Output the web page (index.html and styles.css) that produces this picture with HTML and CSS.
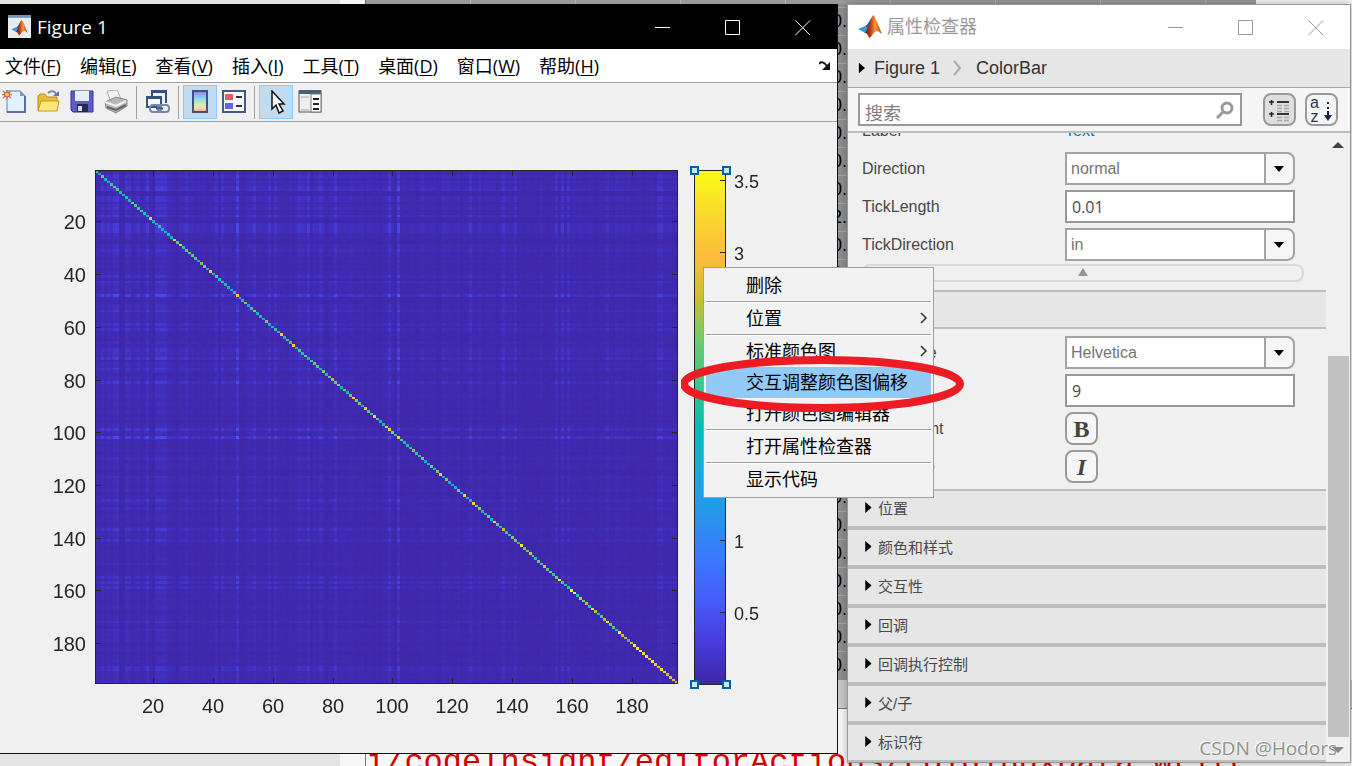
FILE: index.html
```html
<!DOCTYPE html>
<html lang="zh-CN">
<head>
    <meta charset="UTF-8">
    <meta name="viewport" content="width=device-width, initial-scale=1.0">
    <title>Figure 1</title>
    <link rel="stylesheet" href="styles.css">
</head>
<body>
    <svg class="defs" width="0" height="0" aria-hidden="true">
        <defs>
            <linearGradient id="logoRed" x1="0" x2="1">
                <stop offset="0" stop-color="#5a1a10"/>
                <stop offset="0.35" stop-color="#c8401c"/>
                <stop offset="0.6" stop-color="#f59a35"/>
                <stop offset="1" stop-color="#c03a18"/>
            </linearGradient>
            <symbol id="logo" viewBox="0 0 24 24">
                <path d="M0 14 L7 11 L11 15 L7 18 Z" fill="#3f9ad0"/>
                <path d="M7 11 C10 10 12 4 15 1 C14 7 13 12 11 15 Z" fill="#1f5f94"/>
                <path d="M15 0 C12 6 11 12 7 18 C9 18 10 20 11 23 C14 22 16 16 19 16 C21 16 22 18 24 19 C21 12 18 2 15 0 Z" fill="url(#logoRed)"/>
            </symbol>
            <symbol id="arrowDown" viewBox="0 0 12 8">
                <path d="M1 1 H11 L6 7 Z"/>
            </symbol>
            <symbol id="arrowRight" viewBox="0 0 8 12">
                <path d="M1 0 V12 L8 6 Z"/>
            </symbol>
        </defs>
    </svg>

    <div class="desktop">
        <!-- windows that lie behind -->
        <div class="backdrop">
            <div class="sheet"></div>
            <div class="sheet-footer"></div>
            <div class="console">i/codeInsight/editorActions/FoldingxData write</div>
        </div>

        <main class="window figure">
            <header class="titlebar dark">
                <svg class="app-icon" viewBox="0 0 24 24">
                    <rect x="0" y="0" width="24" height="24" fill="#e9edf0"/>
                    <rect x="0" y="0" width="24" height="3" fill="#7396b8"/>
                    <use href="#logo" x="3" y="5" width="18" height="17"/>
                </svg>
                <h1>Figure 1</h1>
                <div class="window-buttons">
                    <button aria-label="最小化"><svg viewBox="0 0 16 16"><path d="M0 8.500H15"/></svg></button>
                    <button aria-label="最大化"><svg viewBox="0 0 16 16"><path d="M.5 1.500H14.500V15.500H.5Z"/></svg></button>
                    <button aria-label="关闭"><svg viewBox="0 0 16 16"><path d="M.5 1.500L15 16M15 1.500L.5 16"/></svg></button>
                </div>
            </header>

            <nav class="menubar">
                <button>文件(<u>F</u>)</button>
                <button>编辑(<u>E</u>)</button>
                <button>查看(<u>V</u>)</button>
                <button>插入(<u>I</u>)</button>
                <button>工具(<u>T</u>)</button>
                <button>桌面(<u>D</u>)</button>
                <button>窗口(<u>W</u>)</button>
                <button>帮助(<u>H</u>)</button>
                <svg class="dock" viewBox="0 0 12 10"><path d="M0 3 C2 0 5 1 8 5" fill="none" stroke="#111" stroke-width="2"/><path d="M11 1 V9 H3 Z" fill="#111"/></svg>
            </nav>

            <div class="toolbar">
                <button aria-label="新建图窗">
                    <svg viewBox="0 0 24 24">
                        <path d="M5 1 H18 L23 6 V22 H5 Z" fill="#e3f1fc" stroke="#8ea3cc" stroke-width="1.500"/>
                        <path d="M23 6 V22 H5" fill="none" stroke="#5a70a0" stroke-width="2"/>
                        <path d="M18 1 V6 H23 Z" fill="#7e96c0"/>
                        <path d="M5 0 V9 M0 4.500 H10 M1 1 L9 8 M9 1 L1 8" stroke="#d07a58" stroke-width="1.500"/>
                        <circle cx="5" cy="4.500" r="2.500" fill="#ffb870" stroke="#c85a30"/>
                    </svg>
                </button>
                <button aria-label="打开文件">
                    <svg viewBox="0 0 24 24">
                        <path d="M2 20 V6 L4 4 H9 L11 7 H21 V20 Z" fill="#e9bd35" stroke="#bd8b18"/>
                        <path d="M2 21 L5 11 H23 L21 21 Z" fill="#ffe77c" stroke="#c8961c"/>
                        <path d="M12 3 C15 0 19 1 20 4" fill="none" stroke="#7390ae" stroke-width="2"/>
                        <path d="M17 6 H23 V1 Z" fill="#5c7c9e"/>
                    </svg>
                </button>
                <button aria-label="保存图窗">
                    <svg viewBox="0 0 24 24">
                        <path d="M1 1 H23 V22 H3 L1 20 Z" fill="#5b5cc8" stroke="#353486"/>
                        <rect x="5" y="1" width="14" height="10" fill="#e5effc"/>
                        <rect x="7" y="14" width="11" height="8" fill="#29294f"/>
                        <rect x="8" y="16" width="4" height="5" fill="#d8dcec"/>
                    </svg>
                </button>
                <button aria-label="打印图窗">
                    <svg viewBox="0 0 24 24">
                        <path d="M6 10 L3 1 L13 0 L17 9 Z" fill="#eef3fc" stroke="#a9b0c4"/>
                        <path d="M1 12 L12 7 L23 10 V16 L12 23 L2 18 Z" fill="#b6b6b6" stroke="#888"/>
                        <path d="M1 12 L12 16 L22 11" fill="none" stroke="#f4f4f4" stroke-width="2"/>
                        <path d="M3 17 L12 20 L22 15" fill="none" stroke="#666" stroke-width="2"/>
                    </svg>
                </button>
                <span class="separator"></span>
                <button aria-label="链接绘图">
                    <svg viewBox="0 0 24 24">
                        <path d="M6 8 V1 H20 V13" fill="none" stroke="#35507f" stroke-width="2"/>
                        <path d="M5 1.500 H21" stroke="#35507f" stroke-width="3"/>
                        <rect x="1" y="7" width="14" height="10" fill="#f4f8fc" stroke="#35507f" stroke-width="2"/>
                        <path d="M0 7.500 H16" stroke="#35507f" stroke-width="3"/>
                        <rect x="4" y="15" width="11" height="7" rx="3" fill="none" stroke="#7189ad" stroke-width="2"/>
                        <rect x="12" y="15" width="11" height="7" rx="3" fill="none" stroke="#7189ad" stroke-width="2"/>
                        <path d="M10 18.500 H17" stroke="#425d83" stroke-width="2"/>
                    </svg>
                </button>
                <span class="separator"></span>
                <button class="active" aria-label="插入颜色栏">
                    <svg viewBox="0 0 24 24">
                        <defs>
                            <linearGradient id="miniBar" x1="0" y1="0" x2="0" y2="1">
                                <stop offset="0" stop-color="#8d7ee4"/>
                                <stop offset="0.35" stop-color="#89d8f5"/>
                                <stop offset="0.6" stop-color="#c6edbb"/>
                                <stop offset="0.8" stop-color="#fae09a"/>
                                <stop offset="1" stop-color="#f3a7a0"/>
                            </linearGradient>
                        </defs>
                        <rect x="5" y="1" width="14" height="21" fill="url(#miniBar)" stroke="#41517a" stroke-width="2"/>
                    </svg>
                </button>
                <button aria-label="插入图例">
                    <svg viewBox="0 0 24 24">
                        <rect x="1" y="1" width="22" height="21" fill="#f6f9ff" stroke="#43598a" stroke-width="2"/>
                        <rect x="3" y="4" width="8" height="6" fill="#e06060"/>
                        <rect x="3" y="13" width="8" height="6" fill="#6666dc"/>
                        <path d="M14 7 H20 M14 16 H20" stroke="#333" stroke-width="2"/>
                    </svg>
                </button>
                <span class="separator"></span>
                <button class="active" aria-label="编辑绘图">
                    <svg viewBox="0 0 24 24">
                        <path d="M8 1 V19 L12 15 L15 23 L19 21 L15 14 H20 Z" fill="#fff" stroke="#111" stroke-width="1.500"/>
                    </svg>
                </button>
                <button aria-label="打开属性检查器">
                    <svg viewBox="0 0 24 24">
                        <rect x="1" y="1" width="22" height="21" fill="#eee" stroke="#555"/>
                        <rect x="1" y="0" width="22" height="4" fill="#4c6078"/>
                        <rect x="13" y="4" width="10" height="18" fill="#fff" stroke="#777"/>
                        <path d="M3 7 H11 M3 20 H11" stroke="#ccc" stroke-width="2"/>
                        <path d="M15 9 H21 M15 14 H21 M15 19 H21" stroke="#222" stroke-width="2"/>
                    </svg>
                </button>
            </div>

            <svg class="axes" viewBox="0 122 837 631">
                <defs>
                    <linearGradient id="parula" x1="0" y1="1" x2="0" y2="0"></linearGradient>
                </defs>
                <foreignObject x="95" y="170" width="583" height="514">
                    <canvas id="heatmap" class="heatmap" width="195" height="195"></canvas>
                </foreignObject>
                <rect class="axis-line" x="95.500" y="170.500" width="582" height="513"/>
                <g id="ticks"></g>
                <rect class="axis-line bar" x="694.500" y="170.500" width="31" height="514"/>
                <g id="barTicks" class="bar-labels"></g>
                <g class="handles">
                    <rect x="691" y="167" width="7" height="7"/>
                    <rect x="723" y="167" width="7" height="7"/>
                    <rect x="691" y="681" width="7" height="7"/>
                    <rect x="723" y="681" width="7" height="7"/>
                </g>
            </svg>
        </main>

        <div class="gutter" id="gutter"></div>

        <aside class="window inspector">
            <header class="titlebar">
                <svg class="app-icon" viewBox="0 0 24 24"><use href="#logo" width="24" height="24"/></svg>
                <h2>属性检查器</h2>
                <div class="window-buttons">
                    <button aria-label="最小化"><svg viewBox="0 0 16 16"><path d="M0 8.500H15"/></svg></button>
                    <button aria-label="最大化"><svg viewBox="0 0 16 16"><path d="M.5 1.500H14.500V15.500H.5Z"/></svg></button>
                    <button aria-label="关闭"><svg viewBox="0 0 16 16"><path d="M.5 1.500L15 16M15 1.500L.5 16"/></svg></button>
                </div>
            </header>

            <nav class="crumbs">
                <svg class="caret" viewBox="0 0 8 12"><use href="#arrowRight"/></svg>
                <a href="#">Figure 1</a>
                <svg class="chevron" viewBox="0 0 8 16"><path d="M1 1 L7 8 L1 15"/></svg>
                <a href="#">ColorBar</a>
            </nav>

            <div class="search-row">
                <div class="search">
                    <input type="text" placeholder="搜索" aria-label="搜索">
                    <svg viewBox="0 0 18 18"><circle cx="11" cy="7" r="5"/><path d="M7 11 L1 17"/></svg>
                </div>
                <button class="square pressed" aria-label="分组">
                    <svg viewBox="0 0 24 24">
                        <path d="M1 4 H6 M3.500 2 V7 M1 16 H6 M3.500 14 V19" stroke="#222" stroke-width="1.500"/>
                        <path d="M9 4 H21 M9 16 H21" stroke="#333" stroke-width="2"/>
                        <path d="M9 7.500 H14 M16 7.500 H21 M9 10.500 H14 M16 10.500 H21 M9 13.500 H14 M16 13.500 H21 M9 19.500 H14 M16 19.500 H21 M9 22.500 H14 M16 22.500 H21" stroke="#aaa" stroke-width="1.500"/>
                    </svg>
                </button>
                <button class="square sort" aria-label="排序">
                    <span>a<br>z</span>
                    <svg viewBox="0 0 10 24"><path d="M5 4 V6 M5 9 V11 M5 13 V20" stroke="#12294d" stroke-width="2"/><path d="M1 17 H9 L5 23 Z" fill="#12294d"/></svg>
                </button>
            </div>

            <div class="panel">
                <div class="properties">
                    <div class="rows scrolled">
                        <div class="row"><span>Label</span><a class="value" href="#">Text</a></div>
                        <div class="row">
                            <label for="direction">Direction</label>
                            <div class="combo">
                                <select id="direction"><option>normal</option><option>reverse</option></select>
                                <svg viewBox="0 0 12 8"><use href="#arrowDown"/></svg>
                            </div>
                        </div>
                        <div class="row">
                            <label for="tickLength">TickLength</label>
                            <input type="text" id="tickLength" value="0.01">
                        </div>
                        <div class="row">
                            <label for="tickDirection">TickDirection</label>
                            <div class="combo">
                                <select id="tickDirection"><option>in</option><option>out</option></select>
                                <svg viewBox="0 0 12 8"><use href="#arrowDown"/></svg>
                            </div>
                        </div>
                    </div>
                    <button class="collapse" aria-label="收起"><svg viewBox="0 0 10 8"><path d="M5 0 L10 8 H0 Z"/></svg></button>

                    <button class="group"><svg viewBox="0 0 12 8"><use href="#arrowDown"/></svg>字体</button>
                    <div class="rows">
                        <div class="row">
                            <label for="fontName">FontName</label>
                            <div class="combo">
                                <select id="fontName"><option>Helvetica</option></select>
                                <svg viewBox="0 0 12 8"><use href="#arrowDown"/></svg>
                            </div>
                        </div>
                        <div class="row">
                            <label for="fontSize">FontSize</label>
                            <input type="text" id="fontSize" value="9">
                        </div>
                        <div class="row">
                            <label for="fontWeight">FontWeight</label>
                            <button class="square bold" id="fontWeight">B</button>
                        </div>
                        <div class="row">
                            <label for="fontAngle">FontAngle</label>
                            <button class="square italic" id="fontAngle">I</button>
                        </div>
                    </div>

                    <button class="group"><svg viewBox="0 0 8 12"><use href="#arrowRight"/></svg>位置</button>
                    <button class="group"><svg viewBox="0 0 8 12"><use href="#arrowRight"/></svg>颜色和样式</button>
                    <button class="group"><svg viewBox="0 0 8 12"><use href="#arrowRight"/></svg>交互性</button>
                    <button class="group"><svg viewBox="0 0 8 12"><use href="#arrowRight"/></svg>回调</button>
                    <button class="group"><svg viewBox="0 0 8 12"><use href="#arrowRight"/></svg>回调执行控制</button>
                    <button class="group"><svg viewBox="0 0 8 12"><use href="#arrowRight"/></svg>父/子</button>
                    <button class="group"><svg viewBox="0 0 8 12"><use href="#arrowRight"/></svg>标识符</button>
                </div>
                <div class="scrollbar">
                    <svg viewBox="0 0 12 6"><path d="M6 0 L12 6 H0 Z" fill="#444"/></svg>
                    <div class="thumb"></div>
                    <svg class="down" viewBox="0 0 12 6"><path d="M0 0 H12 L6 6 Z" fill="#888"/></svg>
                </div>
            </div>
        </aside>

        <div class="context-menu" role="menu">
            <button role="menuitem">删除</button>
            <hr>
            <button role="menuitem">位置<svg viewBox="0 0 6 12"><path d="M0 1 L5 6 L0 11"/></svg></button>
            <hr>
            <button role="menuitem">标准颜色图<svg viewBox="0 0 6 12"><path d="M0 1 L5 6 L0 11"/></svg></button>
            <button role="menuitem" class="selected">交互调整颜色图偏移</button>
            <button role="menuitem">打开颜色图编辑器</button>
            <hr>
            <button role="menuitem">打开属性检查器</button>
            <hr>
            <button role="menuitem">显示代码</button>
        </div>

        <svg class="marker" viewBox="0 0 284 58"><ellipse cx="141" cy="29" rx="138" ry="24"/></svg>
        <div class="watermark">CSDN @Hodors</div>
    </div>

    <script src="figure.js"></script>
</body>
</html>
```
FILE: styles.css
```css
body {
    margin: 0;
    font-family: "Open Sans", "Noto Sans CJK SC", sans-serif;
    color: #000;
}

button, input, select {
    font: inherit;
    color: inherit;
    margin: 0;
    padding: 0;
    border: none;
    background: none;
    box-sizing: border-box;
}

a {
    color: inherit;
    text-decoration: none;
}

.defs {
    position: absolute;
}

.desktop {
    position: relative;
    display: grid;
    grid-template-columns: 838fr 9px 504fr;
    height: 100vh;
    min-height: 766px;
    padding: 4px 1px 0 0;
    box-sizing: border-box;
    overflow: hidden;
}

/* behind the windows */
.backdrop {
    position: absolute;
    inset: 0;
    display: flex;
    flex-direction: column;
    background: linear-gradient(to right, #e4e4e4 340px, #f6f6f6 340px);
}

.sheet {
    height: 680px;
    margin: 0 96px 0 365px;
    border-left: 1px solid #666;
    background: repeating-linear-gradient(to right, #9a9a9a 0 104px, #b4b4b4 104px 105px);
}

.sheet-footer {
    height: 28px;
    margin-left: 365px;
    background: #c8c8c8;
    border-bottom: 1px solid #777;
}

.console {
    flex: 1;
    margin: 32px 96px 0 365px;
    border-left: 1px solid #777;
    font-family: "Liberation Mono", monospace;
    font-size: 32px;
    line-height: 44px;
    color: #d40000;
    background: #f6f6f6;
    white-space: nowrap;
    overflow: hidden;
}

.gutter {
    position: relative;
    padding-top: 3px;
    height: 673px;
    overflow: hidden;
    background: #8e8e8e;
}

.gutter span {
    display: flex;
    justify-content: flex-end;
    height: 27px;
    line-height: 27px;
    border-top: 1px solid #a8a8a8;
    font-family: "Liberation Sans", sans-serif;
    font-size: 18px;
}

/* windows */
.window {
    position: relative;
    display: flex;
    flex-direction: column;
    min-width: 0;
    box-sizing: border-box;
    background: #f0f0f0;
}

.figure {
    margin-bottom: 12px;
    border-right: 1px solid #111;
    border-bottom: 1px solid #111;
    overflow: hidden;
}

.inspector {
    margin-bottom: 3px;
    border: 1px solid #999;
    box-shadow: 0 0 8px rgba(0, 0, 0, 0.3);
    font-family: "Liberation Sans", "Noto Sans CJK SC", sans-serif;
    color: #333;
}

.titlebar {
    display: flex;
    align-items: center;
    height: 44px;
    padding: 0 26px 0 10px;
    background: #fff;
    color: #999;
}

.titlebar.dark {
    height: 45px;
    padding-left: 8px;
    background: #000;
    color: #fff;
}

.titlebar h1, .titlebar h2 {
    flex: 1;
    margin: 0 0 0 5px;
    font-size: 18px;
    line-height: 24px;
    font-weight: normal;
}

.titlebar h1 {
    margin-left: 6px;
    font-size: 19px;
}

.app-icon {
    width: 24px;
    height: 24px;
}

.dark .app-icon {
    width: 23px;
    height: 23px;
}

.window-buttons {
    display: flex;
    gap: 54px;
}

.window-buttons button {
    display: flex;
}

.window-buttons svg {
    width: 16px;
    height: 16px;
    fill: none;
    stroke: currentColor;
    stroke-width: 1;
}

.menubar {
    display: flex;
    align-items: center;
    gap: 19px;
    height: 33px;
    padding: 0 6px 0 5px;
    background: #fff;
    border-bottom: 1px solid #a0a0a0;
    font-size: 18px;
    line-height: 30px;
}

.menubar button {
    white-space: nowrap;
}

.menubar u {
    text-underline-offset: 2px;
    text-decoration-thickness: 1px;
}

.dock {
    width: 12px;
    height: 10px;
    margin-left: auto;
}

.toolbar {
    display: flex;
    align-items: center;
    height: 38px;
    margin-left: -3px;
    border-bottom: 1px solid #a0a0a0;
}

.toolbar button {
    display: flex;
    align-items: center;
    justify-content: center;
    width: 34px;
    height: 34px;
}

.toolbar .active {
    background: #c0dcf3;
    border: 1px solid #90c8f6;
}

.toolbar svg {
    width: 24px;
    height: 24px;
    flex: none;
}

.separator {
    width: 1px;
    height: 33px;
    margin: 0 4px 0 3px;
    background: #a0a0a0;
}

/* plot */
.axes {
    width: 100%;
    flex: 1;
    min-height: 0;
    font-family: "Liberation Sans", sans-serif;
    font-size: 20px;
    fill: #262626;
}

.heatmap {
    display: block;
    width: 100%;
    height: 100%;
    image-rendering: pixelated;
}

.axis-line {
    fill: none;
    stroke: #262626;
}

.axis-line.bar {
    fill: url(#parula);
}

.tick {
    stroke: #262626;
}

.bar-labels {
    font-size: 18px;
}

.handles {
    fill: #cde6f7;
    stroke: #0060a8;
    stroke-width: 2;
}

/* inspector */
.crumbs {
    display: flex;
    align-items: center;
    height: 38px;
    padding-left: 10px;
    background: #e6e6e6;
    border-bottom: 1px solid #a6a6a6;
    font-size: 18px;
}

.caret {
    width: 7px;
    height: 12px;
    margin-right: 9px;
    fill: #000;
}

.chevron {
    width: 8px;
    height: 16px;
    margin: 0 15px 0 13px;
    fill: none;
    stroke: #aaa;
    stroke-width: 2;
}

.search-row {
    display: flex;
    align-items: center;
    height: 43px;
    padding: 0 12px 0 10px;
    background: #f5f5f5;
    border-bottom: 2px solid #bdbdbd;
}

.search {
    display: flex;
    align-items: center;
    flex: 1;
    height: 33px;
    margin-right: 21px;
    padding-right: 6px;
    box-sizing: border-box;
    border: 2px solid #999;
    background: #fff;
}

.search input {
    flex: 1;
    min-width: 0;
    height: 29px;
    padding: 4px 0 0 5px;
    font-family: "Noto Sans CJK SC", sans-serif;
    font-size: 18px;
}

.search input::placeholder {
    color: #808080;
}

.search svg {
    width: 18px;
    height: 18px;
    fill: none;
    stroke: #999;
    stroke-width: 3;
}

.square {
    display: flex;
    align-items: center;
    justify-content: center;
    width: 33px;
    height: 33px;
    border: 2px solid #999;
    border-radius: 8px;
    background: #f6f6f6;
}

.square svg {
    flex: none;
    height: 24px;
}

.square.pressed {
    background: #dedede;
}

.square.pressed svg {
    width: 24px;
}

.square.sort {
    margin-left: 9px;
    font-size: 16px;
    line-height: 14px;
    gap: 4px;
}

.sort svg {
    width: 10px;
}

.square.bold, .square.italic {
    font-family: "Liberation Serif", serif;
    font-size: 24px;
    font-weight: bold;
    line-height: 28px;
    color: #444;
}

.square.italic {
    font-style: italic;
}

.panel {
    display: grid;
    grid-template-columns: 1fr 24px;
    flex: 1;
    min-height: 0;
    overflow: hidden;
}

.properties {
    min-width: 0;
    overflow: hidden;
}

.rows {
    display: flex;
    flex-direction: column;
    gap: 5px;
    padding: 7px 31px 6px 14px;
    font-size: 16px;
    color: #484848;
}

.rows.scrolled {
    margin-top: -19px;
    padding-top: 0;
    padding-bottom: 3px;
}

.row {
    display: grid;
    grid-template-columns: 203fr 230fr;
    align-items: center;
    height: 33px;
}

.value {
    color: #0076c0;
}

.row input {
    height: 33px;
    min-width: 0;
    padding-left: 5px;
    border: 2px solid #999;
    background: #fff;
    font-family: "Open Sans", sans-serif;
}

.combo {
    display: flex;
    align-items: center;
    height: 33px;
    box-sizing: border-box;
    border: 2px solid #a4a4a4;
    border-radius: 0 8px 8px 0;
    background: #f6f6f6;
    overflow: hidden;
}

.combo select {
    flex: 1;
    align-self: stretch;
    padding-left: 4px;
    appearance: none;
    border-right: 2px solid #a4a4a4;
    border-radius: 0;
    background: #fff;
    color: #747474;
}

.combo svg {
    width: 12px;
    height: 8px;
    margin: 0 8px 0 7px;
    fill: #000;
}

.collapse {
    display: flex;
    justify-content: center;
    width: calc(100% - 36px);
    height: 18px;
    margin: 0 22px 8px 14px;
    padding-top: 2px;
    border: 2px solid #d8d8d8;
    border-radius: 8px;
}

.collapse svg {
    width: 10px;
    height: 8px;
    fill: #949494;
}

.group {
    display: flex;
    align-items: center;
    width: 100%;
    height: 39px;
    padding: 0 0 2px 16px;
    border-top: 2px solid #bdbdbd;
    border-bottom: 2px solid #bdbdbd;
    background: #e6e6e6;
    font-size: 15px;
    color: #484848;
}

.group svg {
    width: 8px;
    height: 11px;
    margin-right: 6px;
    fill: #000;
}

.scrollbar {
    display: grid;
    grid-template-rows: 24px 199fr 381fr 25px;
    justify-items: center;
    align-items: center;
}

.scrollbar svg {
    width: 12px;
    height: 6px;
}

.thumb {
    grid-row: 3;
    align-self: stretch;
    width: 21px;
    background: #c1c1c1;
}

.scrollbar .down {
    grid-row: 4;
}

/* popup of the colorbar */
.context-menu {
    position: absolute;
    left: 703px;
    top: 267px;
    width: 231px;
    padding: 2px;
    box-sizing: border-box;
    border: 1px solid #a0a0a0;
    background: #f2f2f2;
}

.context-menu button {
    display: flex;
    align-items: center;
    justify-content: space-between;
    width: 100%;
    height: 31px;
    padding: 0 4px 2px 40px;
    font-size: 18px;
    line-height: 28px;
}

.context-menu .selected {
    background: #91c9f7;
}

.context-menu hr {
    height: 1px;
    margin: 0;
    border: none;
    border-top: 1px solid #a0a0a0;
    background: #fff;
}

.context-menu svg {
    width: 6px;
    height: 12px;
    overflow: visible;
    fill: none;
    stroke: #333;
    stroke-width: 1.5;
}

.marker {
    position: absolute;
    left: 681px;
    top: 355px;
    width: 284px;
    height: 58px;
    fill: none;
    stroke: #ed1c24;
    stroke-width: 8;
}

.watermark {
    position: absolute;
    right: 15px;
    bottom: 6px;
    font-size: 19px;
    line-height: 24px;
    color: #909090;
    text-shadow: -1px -1px 0 #fff;
}
```
FILE: figure.js
```js
const N = 195;
const SVG_NS = 'http://www.w3.org/2000/svg';
const PARULA = [
    [62, 38, 168], [70, 60, 220], [71, 92, 250], [58, 122, 254], [39, 150, 235],
    [20, 172, 222], [5, 190, 182], [55, 200, 140], [105, 204, 110], [200, 193, 41],
    [254, 188, 60], [249, 218, 45], [249, 251, 21]
];

function parula(v) {
    const p = Math.max(0, Math.min(0.9999, v)) * (PARULA.length - 1);
    const k = Math.floor(p);
    return PARULA[k].map((c, i) => Math.round(c + (PARULA[k + 1][i] - c) * (p - k)));
}

// repeatable random numbers
let seed = 29;
function random() {
    seed = (seed * 1664525 + 1013904223) % 4294967296;
    return seed / 4294967296;
}

// strength of each row and column
const strength = [];
for (let i = 0; i < N; i++) {
    const level = i < 100 ? 0.15 : 0.1;
    strength.push(0.03 + random() * level + (random() > 0.85 ? 0.08 : 0));
}
const peaks = {
    2: 0.32, 4: 0.3, 6: 0.38, 7: 0.42, 10: 0.32, 11: 0.3, 14: 0.3, 17: 0.42, 20: 0.38, 21: 0.38,
    22: 0.4, 23: 0.36, 30: 0.3, 40: 0.3, 42: 0.32, 47: 0.6, 53: 0.34, 58: 0.32, 60: 0.32, 68: 0.32,
    71: 0.42, 75: 0.34, 80: 0.38, 98: 0.42, 101: 0.58, 125: 0.32, 136: 0.32, 140: 0.28,
    154: 0.3, 156: 0.34, 158: 0.3, 171: 0.25, 188: 0.28, 189: 0.3
};
for (const i in peaks) {
    strength[i] = peaks[i];
}

function drawHeatmap() {
    const context = document.getElementById('heatmap').getContext('2d');
    for (let y = 0; y < N; y++) {
        for (let x = 0; x <= y; x++) {
            let v = strength[x] * strength[y] * 0.42 + (strength[x] + strength[y]) * 0.018 + random() * 0.006 - 0.002;
            if (x === y) {
                v = 0.42 + random() * 0.3;
                if (random() > 0.85 || x === 47 || x === 98 || x === 101) v = 0.88;
                if (x > 135) v += 0.1;
                if (x > 182) v = 0.75 + random() * 0.22;
            }
            context.fillStyle = `rgb(${parula(v).join(',')})`;
            context.fillRect(x, y, 1, 1);
            context.fillRect(y, x, 1, 1);
        }
    }
}

function addLine(parent, x1, y1, x2, y2) {
    const line = document.createElementNS(SVG_NS, 'path');
    line.setAttribute('d', `M${x1} ${y1}L${x2} ${y2}`);
    line.setAttribute('class', 'tick');
    parent.appendChild(line);
}

function addText(parent, x, y, text, anchor) {
    const label = document.createElementNS(SVG_NS, 'text');
    label.setAttribute('x', x);
    label.setAttribute('y', y);
    label.setAttribute('text-anchor', anchor);
    label.textContent = text;
    parent.appendChild(label);
}

function drawTicks() {
    const ticks = document.getElementById('ticks');
    for (let n = 20; n <= 180; n += 20) {
        const x = Math.round(95 + (n - 0.5) * 583 / N) + 0.5;
        const y = Math.round(170 + (n - 0.5) * 514 / N) + 0.5;
        addLine(ticks, x, 171, x, 176);
        addLine(ticks, x, 678, x, 683);
        addLine(ticks, 96, y, 101, y);
        addLine(ticks, 672, y, 677, y);
        addText(ticks, Math.floor(x), 713, n, 'middle');
        addText(ticks, 86, Math.round(y) + 7, n, 'end');
    }

    const barTicks = document.getElementById('barTicks');
    for (let v = 0.5; v <= 3.5; v += 0.5) {
        const y = Math.round(685 - v * 144) - 0.5;
        addLine(barTicks, 720, y, 725, y);
        addText(barTicks, 734, Math.round(y) + 7, v, 'start');
    }
}

function fillColorbar() {
    const gradient = document.getElementById('parula');
    PARULA.forEach((color, i) => {
        const stop = document.createElementNS(SVG_NS, 'stop');
        stop.setAttribute('offset', i / (PARULA.length - 1));
        stop.setAttribute('stop-color', `rgb(${color.join(',')})`);
        gradient.appendChild(stop);
    });
}

function fillGutter() {
    const gutter = document.getElementById('gutter');
    for (let i = 0; i < 24; i++) {
        const cell = document.createElement('span');
        cell.textContent = i === 7 ? '2.' : '0.';
        gutter.appendChild(cell);
    }
}

fillColorbar();
drawHeatmap();
drawTicks();
fillGutter();
```
